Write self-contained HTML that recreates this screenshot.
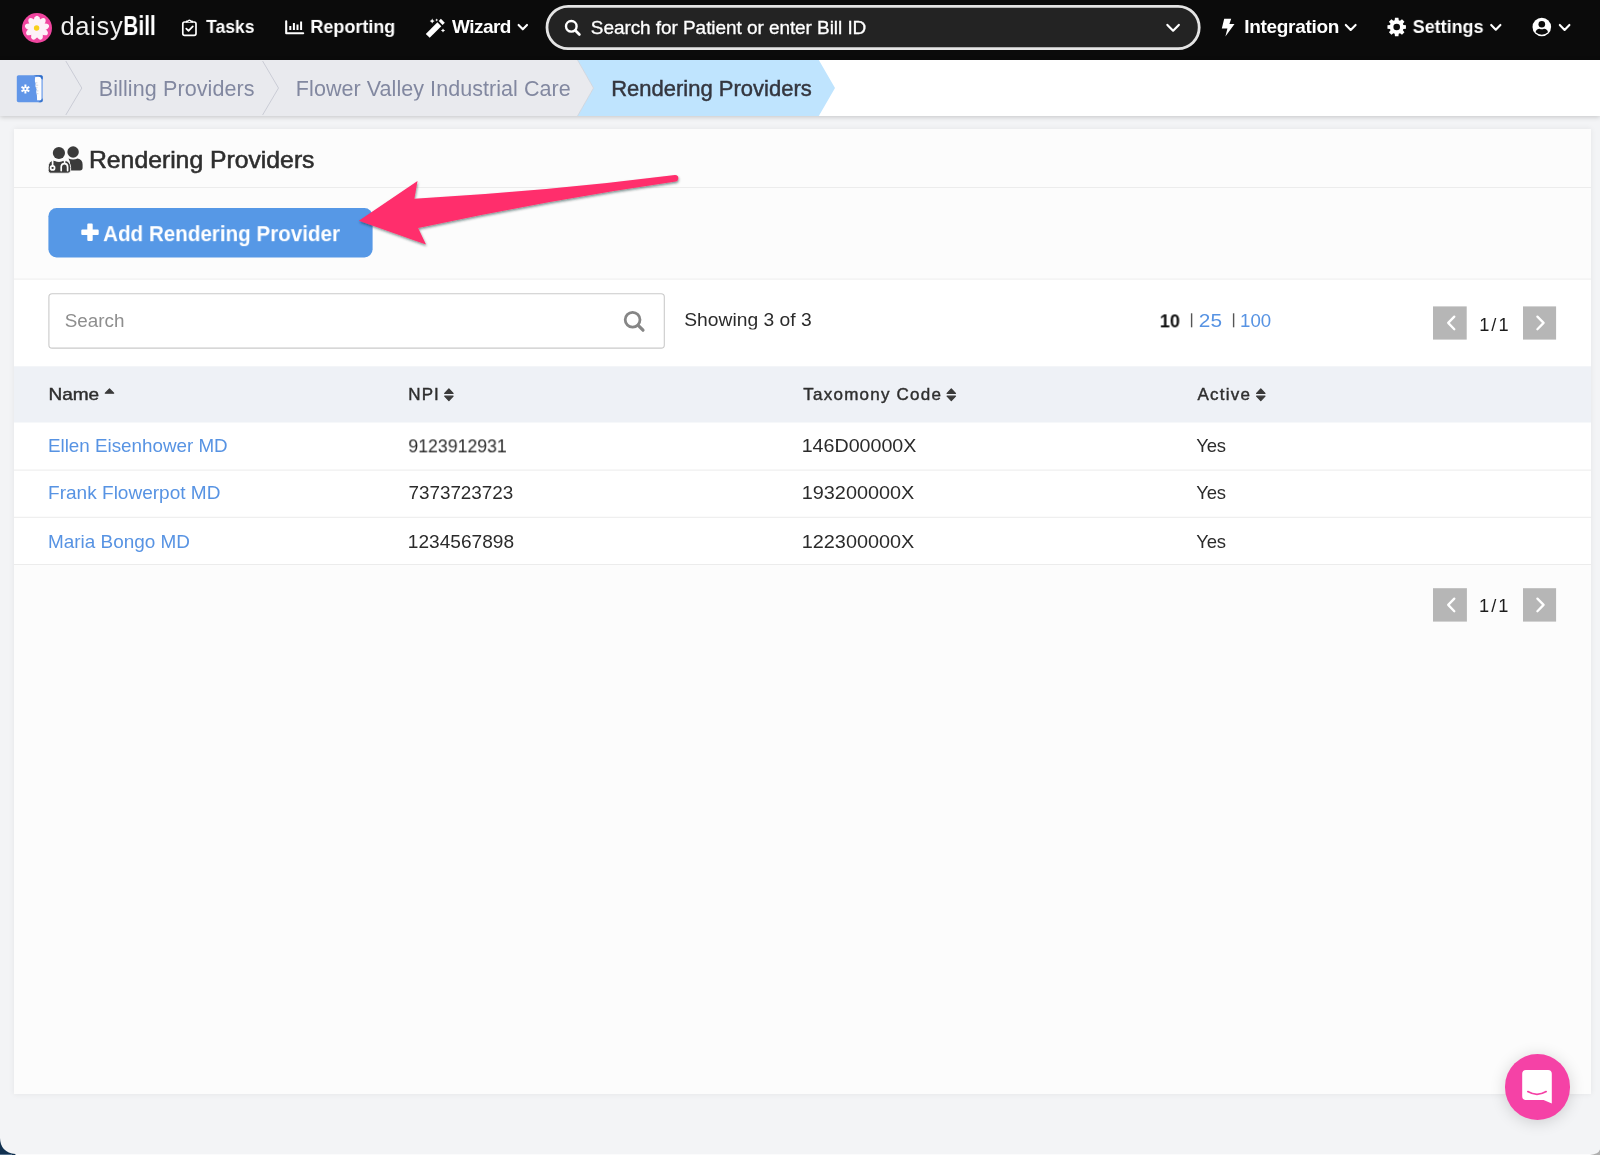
<!DOCTYPE html>
<html lang="en">
<head>
<meta charset="utf-8">
<title>Rendering Providers - daisyBill</title>
<style>
*{box-sizing:border-box;margin:0;padding:0}
html,body{width:1600px;height:1155px;overflow:hidden}
body{position:relative;background:#f3f4f6;font-family:"Liberation Sans",sans-serif;color:#222}
.abs{position:absolute}
.t{position:absolute;white-space:nowrap;line-height:1;text-decoration:none;will-change:transform}
#nav{left:0;top:0;width:1600px;height:60px;background:#0b0b0b}
#crumbs{left:0;top:60px;width:1600px;height:56px;background:#fff;box-shadow:0 1px 5px rgba(0,0,0,.2)}
#card{left:14px;top:129px;width:1577px;height:965px;background:#fcfcfc;box-shadow:0 0 6px rgba(0,0,0,.07)}
svg{position:absolute;overflow:visible}
</style>
</head>
<body>

<!-- NAVBAR -->
<div id="nav" class="abs">
  <svg id="daisy" style="left:22px;top:12.6px" width="30" height="30" viewBox="0 0 30 30">
    <circle cx="15" cy="15" r="15" fill="#f0459f"/>
    <g fill="#fff" opacity=".93">
      <ellipse cx="15" cy="8.3" rx="3.3" ry="5.6"/>
      <ellipse cx="15" cy="8.3" rx="3.3" ry="5.6" transform="rotate(40 15 15)"/>
      <ellipse cx="15" cy="8.3" rx="3.3" ry="5.6" transform="rotate(80 15 15)"/>
      <ellipse cx="15" cy="8.3" rx="3.3" ry="5.6" transform="rotate(120 15 15)"/>
      <ellipse cx="15" cy="8.3" rx="3.3" ry="5.6" transform="rotate(160 15 15)"/>
      <ellipse cx="15" cy="8.3" rx="3.3" ry="5.6" transform="rotate(200 15 15)"/>
      <ellipse cx="15" cy="8.3" rx="3.3" ry="5.6" transform="rotate(240 15 15)"/>
      <ellipse cx="15" cy="8.3" rx="3.3" ry="5.6" transform="rotate(280 15 15)"/>
      <ellipse cx="15" cy="8.3" rx="3.3" ry="5.6" transform="rotate(320 15 15)"/>
    </g>
    <circle cx="14.6" cy="15" r="2.7" fill="#f8cf1c"/>
  </svg>
  <span class="t" id="logo1" style="left:60px;top:14px;font-size:25.5px;letter-spacing:0.675px;color:#f0f0f0;transform-origin:0 0;transform:translate(0.40px,0.31px);">daisy</span><span class="t" id="logo2" style="left:123px;top:13px;font-size:27px;letter-spacing:0.000px;color:#fff;font-weight:bold;transform-origin:0 0;transform:translate(0.20px,0.04px) scaleX(0.7766);">Bill</span>

  <!-- clipboard-check -->
  <svg style="left:0;top:0" width="1600" height="60" viewBox="0 0 1600 60" fill="none" stroke="#fff" stroke-linecap="round" stroke-linejoin="round">
    <rect x="182.8" y="22" width="13.2" height="13.4" rx="1.8" stroke-width="1.7"/>
    <path d="M186.6,22 V21.2 H187.9 A1.6,1.6 0 0 1 190.9,21.2 H192.2 V22" stroke-width="1.5" fill="#0b0b0b"/>
    <path d="M186.3,28.7 L188.5,30.9 L192.8,26.4" stroke-width="1.8"/>
    <!-- bar chart -->
    <path d="M286.2,21.2 V33.3 H303.2" stroke-width="2.1"/>
    <path d="M290.3,26 V30 M293.9,23 V30 M297.5,24.6 V30 M301.1,21.6 V30" stroke-width="2" stroke-linecap="butt"/>
    <!-- wand -->
    <g stroke="none" fill="#fff">
      <path d="M425.8,33.9 L437.4,22.3 L441.3,26.2 L429.7,37.8 Z"/>
      <path d="M438.7,21 L440.9,18.8 L444.8,22.7 L442.6,24.9 Z"/>
      <path d="M432.2,18.6 l.8,1.7 l1.7,.8 l-1.7,.8 l-.8,1.7 l-.8,-1.7 l-1.7,-.8 l1.7,-.8 Z"/>
      <path d="M436.7,18.4 l.5,1 l1,.5 l-1,.5 l-.5,1 l-.5,-1 l-1,-.5 l1,-.5 Z"/>
      <path d="M443,28.4 l.7,1.4 l1.4,.7 l-1.4,.7 l-.7,1.4 l-.7,-1.4 l-1.4,-.7 l1.4,-.7 Z"/>
    </g>
    <!-- chevrons -->
    <path d="M518.6,24.9 L522.8,29.3 L527,24.9" stroke-width="2.1"/>
    <path d="M1345.8,24.9 L1350.7,29.9 L1355.6,24.9" stroke-width="2.1"/>
    <path d="M1491.2,24.9 L1495.8,29.7 L1500.4,24.9" stroke-width="2.1"/>
    <path d="M1559.8,24.9 L1564.6,29.9 L1569.4,24.9" stroke-width="2.1"/>
    <!-- bolt -->
    <path stroke="none" fill="#fff" d="M1224.2,18.7 H1231.2 L1229.4,24 H1234.5 L1225.4,36.4 L1227.4,28.6 H1221.8 Z"/>
    <!-- gear -->
    <path stroke="none" fill="#fff" fill-rule="evenodd" d="M1394.67,20.30 L1394.96,17.76 L1398.44,17.76 L1398.73,20.30 L1400.00,20.83 L1402.00,19.24 L1404.46,21.70 L1402.87,23.70 L1403.40,24.97 L1405.94,25.26 L1405.94,28.74 L1403.40,29.03 L1402.87,30.30 L1404.46,32.30 L1402.00,34.76 L1400.00,33.17 L1398.73,33.70 L1398.44,36.24 L1394.96,36.24 L1394.67,33.70 L1393.40,33.17 L1391.40,34.76 L1388.94,32.30 L1390.53,30.30 L1390.00,29.03 L1387.46,28.74 L1387.46,25.26 L1390.00,24.97 L1390.53,23.70 L1388.94,21.70 L1391.40,19.24 L1393.40,20.83 Z M1393.40,27.00 A3.3,3.3 0 1 0 1400.00,27.00 A3.3,3.3 0 1 0 1393.40,27.00 Z"/>
    <!-- user circle -->
    <circle cx="1541.8" cy="27" r="9.3" fill="#fff" stroke="none"/>
    <circle cx="1541.8" cy="24.3" r="3.3" fill="#0b0b0b" stroke="none"/>
    <path stroke="none" fill="#0b0b0b" d="M1535.6,32.3 Q1536.2,29 1539.6,28.8 Q1541.8,29.8 1544,28.8 Q1547.4,29 1548,32.3 Q1545.4,34.7 1541.8,34.7 Q1538.2,34.7 1535.6,32.3 Z"/>
  </svg>
  <span class="t" id="n1" style="left:206px;top:16px;font-size:19px;letter-spacing:0.000px;color:#fff;font-weight:bold;transform-origin:0 0;transform:translate(0.14px,0.92px) scaleX(0.9203);">Tasks</span><span class="t" id="n2" style="left:310px;top:16px;font-size:19px;letter-spacing:0.000px;color:#fff;font-weight:bold;transform-origin:0 0;transform:translate(0.36px,0.92px) scaleX(0.9464);">Reporting</span><span class="t" id="n3" style="left:451px;top:16px;font-size:19px;letter-spacing:-0.518px;color:#fff;font-weight:bold;transform-origin:0 0;transform:translate(0.90px,0.92px);">Wizard</span>
  <svg style="left:0;top:0" width="1600" height="60" viewBox="0 0 1600 60"><rect x="547" y="6.4" width="652.2" height="42.2" rx="21.1" fill="#232323" stroke="#e4e4e4" stroke-width="2.8"/></svg>
  <svg style="left:0;top:0" width="1600" height="60" viewBox="0 0 1600 60" fill="none" stroke="#fff" stroke-linecap="round" stroke-linejoin="round">
    <circle cx="571.3" cy="26.3" r="5.3" stroke-width="2.4"/>
    <path d="M575.4,30.5 L579.4,34.5" stroke-width="2.7"/>
    <path d="M1167.4,24.9 L1173.1,30.7 L1178.8,24.9" stroke-width="2.2"/>
  </svg>
  <span class="t" id="n4" style="left:590px;top:17px;font-size:19px;letter-spacing:-0.065px;color:#fff;-webkit-text-stroke:.3px #fff;transform-origin:0 0;transform:translate(0.80px,0.72px);">Search for Patient or enter Bill ID</span><span class="t" id="n5" style="left:1244px;top:16px;font-size:19px;letter-spacing:-0.291px;color:#fff;font-weight:bold;transform-origin:0 0;transform:translate(0.19px,0.92px);">Integration</span><span class="t" id="n6" style="left:1412px;top:16px;font-size:19px;letter-spacing:0.000px;color:#fff;font-weight:bold;transform-origin:0 0;transform:translate(0.71px,0.92px) scaleX(0.9438);">Settings</span>
</div>

<!-- BREADCRUMBS -->
<div id="crumbs" class="abs">
  <svg style="left:0;top:0" width="900" height="56" viewBox="0 0 900 55.5" preserveAspectRatio="none">
    <polygon points="0,0 577.5,0 593.5,27.8 577.5,55.5 0,55.5" fill="#e9eaee"/>
    <polygon points="577.5,0 818.8,0 835,27.8 818.8,55.5 577.5,55.5 593.5,27.8" fill="#bfe4fe"/>
    <polyline points="577.5,0 593.5,27.8 577.5,55.5" fill="none" stroke="#cfd2da" stroke-width=".8"/>
    <polyline points="65.8,1 81.8,27.8 65.8,54.5" fill="none" stroke="#c6c9d3" stroke-width=".9"/>
    <polyline points="262.6,1 278.5,27.8 262.6,54.5" fill="none" stroke="#c6c9d3" stroke-width=".9"/>
    <!-- home icon -->
    <rect x="16.8" y="15" width="25.9" height="26.8" rx="1.7" fill="#6196e8"/>
    <path d="M33.5,15 H41 Q42.7,15 42.7,16.7 V20 L40.4,17.2 Z" fill="#2f6dc8"/>
    <path d="M38.5,41.8 H41 Q42.7,41.8 42.7,40.1 V37.5 L40.6,40 Z" fill="#3a75cc"/>
    <rect x="41" y="19" width="1.5" height="19.5" fill="#9cbcef"/>
    <path d="M35,17.2 Q37.6,16.2 40.2,16.9 L41.2,18.6 V39.6 Q39.2,40.2 37.1,39.9 L36.9,35 L36.2,31.6 L36.6,29 L35.4,26 L35.6,23.4 L34.9,21 Z" fill="#fdfdfe"/>
    <path d="M35.6,22.6 h1.8 M36,25 h2.2 M35.9,27.4 h1.6 M36.8,30.6 h1.6 M37,33.4 h1.4" stroke="#c8c8cc" stroke-width=".7" fill="none"/>
    <g stroke="#fff" stroke-width="2" stroke-linecap="butt">
      <path d="M25.4,24.3 V33.3 M21.5,26.55 L29.3,31.05 M29.3,26.55 L21.5,31.05"/>
    </g>
    <circle cx="25.4" cy="28.8" r="1" fill="#6196e8"/>
  </svg>
  <span class="t" id="c1" style="left:98px;top:18px;font-size:21.5px;letter-spacing:0.105px;color:#8288a0;transform-origin:0 0;transform:translate(0.77px,0.55px);">Billing Providers</span><span class="t" id="c2" style="left:295px;top:18px;font-size:21.5px;letter-spacing:0.059px;color:#8288a0;transform-origin:0 0;transform:translate(0.86px,0.55px);">Flower Valley Industrial Care</span><span class="t" id="c3" style="left:611px;top:18px;font-size:21.5px;letter-spacing:0.000px;color:#34363f;-webkit-text-stroke:.45px #34363f;transform-origin:0 0;transform:translate(0.13px,0.55px) scaleX(1.0236);">Rendering Providers</span>
</div>

<!-- CARD -->
<div id="card" class="abs">
  <svg id="cardshapes" style="left:-14px;top:-129px" width="1600" height="1155" viewBox="0 0 1600 1155">
    <!-- section backgrounds and rules -->
    <rect x="14" y="187" width="1577" height="1" fill="#ececec"/>
    <rect x="14" y="279" width="1577" height="87.4" fill="#fff"/>
    <rect x="14" y="278.6" width="1577" height="1" fill="#ededed"/>
    <rect x="14" y="366.3" width="1577" height="56.4" fill="#eef1f6"/>
    <rect x="14" y="422.7" width="1577" height="141.6" fill="#fff"/>
    <rect x="14" y="469.6" width="1577" height="1" fill="#ececec"/>
    <rect x="14" y="516.8" width="1577" height="1" fill="#ececec"/>
    <rect x="14" y="564" width="1577" height="1" fill="#ececec"/>
    <!-- people icon -->
    <g fill="#3b3b3b">
      <circle cx="73.1" cy="152" r="5.7"/>
      <path d="M68.5,158.6 Q73,160.6 77.6,158.6 Q82.6,159.4 82.6,164.6 V167.8 Q82.6,170.4 80,170.4 H70 V162 Z"/>
      <circle cx="58.9" cy="153" r="6.1"/>
      <path stroke="#fcfcfc" stroke-width=".9" d="M53.4,160.2 Q58.9,163 64.4,160.2 Q70.6,161.2 70.6,167.4 V170.6 Q70.6,173.2 68,173.2 H50.6 Q48.2,173.2 48.2,170.6 V167.4 Q48.2,161.2 53.4,160.2 Z"/>
    </g>
    <g fill="none" stroke="#fcfcfc" stroke-width="1.7" stroke-linecap="round">
      <path d="M52.6,160.6 V166"/>
      <circle cx="52.6" cy="167.9" r="2"/>
      <path d="M64.6,160.8 V163.4 M61.2,170.6 V167 Q61.2,163.6 64.6,163.6 Q67.6,163.6 67.6,167 V170.6"/>
    </g>
    <!-- add button -->
    <rect id="addbtn" x="48.4" y="208.1" width="324.2" height="49.4" rx="8.2" fill="#5698e6"/>
    <path transform="translate(81.1,223.3)" d="M6.2,1.2 Q6.2,.2 7.2,.2 H10.6 Q11.6,.2 11.6,1.2 V6.2 H16.6 Q17.6,6.2 17.6,7.2 V10.6 Q17.6,11.6 16.6,11.6 H11.6 V16.6 Q11.6,17.6 10.6,17.6 H7.2 Q6.2,17.6 6.2,16.6 V11.6 H1.2 Q.2,11.6 .2,10.6 V7.2 Q.2,6.2 1.2,6.2 H6.2 Z" fill="#fff"/>
    <!-- search input -->
    <rect x="48.9" y="293.7" width="615.4" height="54.4" rx="3.2" fill="#fff" stroke="#cacaca" stroke-width="1.1"/>
    <g fill="none" stroke="#868686" stroke-linecap="round">
      <circle cx="632.6" cy="319.7" r="7.4" stroke-width="2.8"/>
      <path d="M638.2,325.4 L643,330.2" stroke-width="3.2"/>
    </g>
    <!-- per-page bars -->
    <rect x="1190.9" y="313.3" width="1.4" height="14" fill="#555"/>
    <rect x="1232.9" y="313.3" width="1.4" height="14" fill="#555"/>
    <!-- pagination buttons -->
    <g fill="#b6b6b6">
      <rect x="1433" y="306.4" width="33.7" height="33.2"/>
      <rect x="1523" y="306.4" width="33.1" height="33.2"/>
      <rect x="1433" y="588.2" width="33.9" height="33.4"/>
      <rect x="1523" y="588.2" width="33.1" height="33.4"/>
    </g>
    <g fill="none" stroke="#fff" stroke-width="2.3" stroke-linecap="round" stroke-linejoin="round">
      <path d="M1454.3,316.6 L1448.2,322.9 L1454.3,329.2"/>
      <path d="M1537.4,316.6 L1543.6,322.9 L1537.4,329.2"/>
      <path d="M1454.3,598.6 L1448.2,604.9 L1454.3,611.2"/>
      <path d="M1537.4,598.6 L1543.6,604.9 L1537.4,611.2"/>
    </g>
    <!-- sort carets -->
    <g fill="#3a3a3a" stroke="#3a3a3a" stroke-width="1.2" stroke-linejoin="round">
      <path d="M109.5,389 L113.7,393.2 H105.3 Z"/>
      <path d="M448.9,389 L453.1,393.4 H444.7 Z M448.9,400.6 L453.1,396.2 H444.7 Z"/>
      <path d="M951.3,389 L955.5,393.4 H947.1 Z M951.3,400.6 L955.5,396.2 H947.1 Z"/>
      <path d="M1260.8,389 L1265,393.4 H1256.6 Z M1260.8,400.6 L1265,396.2 H1256.6 Z"/>
    </g>
  </svg>
  <span class="t" id="title" style="left:75px;top:19px;font-size:23.4px;letter-spacing:0.000px;color:#2e2e2e;-webkit-text-stroke:.55px #2e2e2e;transform-origin:0 0;transform:translate(0.00px,0.94px) scaleX(1.0575);">Rendering Providers</span>
  <span class="t" id="addtxt" style="left:89px;top:94px;font-size:22px;letter-spacing:0.000px;color:#fff;font-weight:bold;transform-origin:0 0;transform:translate(0.10px,0.13px) scaleX(0.9362);">Add Rendering Provider</span>
  <span class="t" id="sph" style="left:50px;top:183px;font-size:18.3px;letter-spacing:0.000px;color:#8e8e8e;transform-origin:0 0;transform:translate(0.69px,0.31px) scaleX(1.0310);">Search</span>
  <span class="t" id="showing" style="left:670px;top:181px;font-size:18.4px;letter-spacing:0.000px;color:#2b2b2b;transform-origin:0 0;transform:translate(0.25px,0.52px) scaleX(1.0473);">Showing 3 of 3</span>
  <span class="t" id="p10" style="left:1145px;top:183px;font-size:18.4px;letter-spacing:0.000px;color:#111;font-weight:bold;transform-origin:0 0;transform:translate(0.71px,0.32px) scaleX(0.9875);">10</span><a class="t" id="p25" style="left:1184px;top:183px;font-size:18.4px;letter-spacing:0.000px;color:#5793e3;transform-origin:0 0;transform:translate(0.87px,0.32px) scaleX(1.1320);">25</a><a class="t" id="p100" style="left:1226px;top:183px;font-size:18.4px;letter-spacing:0.000px;color:#5793e3;transform-origin:0 0;transform:translate(0.09px,0.32px) scaleX(1.0133);">100</a>
  <span class="t" id="pg1" style="left:1465px;top:187px;font-size:18.2px;letter-spacing:-1.494px;color:#1c1c1c;transform-origin:0 0;transform:translate(0.14px,0.34px);">1 / 1</span>
  <span class="t" id="h1" style="left:34px;top:256px;font-size:17px;letter-spacing:0.000px;color:#2e2e2e;-webkit-text-stroke:.42px #2e2e2e;transform-origin:0 0;transform:translate(0.46px,0.86px) scaleX(1.1185);">Name</span><span class="t" id="h2" style="left:394px;top:256px;font-size:17px;letter-spacing:1.046px;color:#2e2e2e;-webkit-text-stroke:.42px #2e2e2e;transform-origin:0 0;transform:translate(0.32px,0.86px);">NPI</span><span class="t" id="h3" style="left:789px;top:256px;font-size:17px;letter-spacing:1.230px;color:#2e2e2e;-webkit-text-stroke:.42px #2e2e2e;transform-origin:0 0;transform:translate(0.31px,0.86px);">Taxomony Code</span><span class="t" id="h4" style="left:1183px;top:256px;font-size:17px;letter-spacing:1.199px;color:#2e2e2e;-webkit-text-stroke:.42px #2e2e2e;transform-origin:0 0;transform:translate(0.57px,0.86px);">Active</span>
  <a class="t" id="r1a" style="left:33px;top:308px;font-size:18.5px;letter-spacing:0.000px;color:#5793e3;transform-origin:0 0;transform:translate(0.96px,0.34px) scaleX(1.0162);">Ellen Eisenhower MD</a><span class="t" id="r1b" style="left:394px;top:308px;font-size:18.5px;letter-spacing:0.000px;color:#2b2b2b;transform-origin:0 0;transform:translate(0.36px,0.34px) scaleX(0.9565);">9123912931</span><span class="t" id="r1c" style="left:787px;top:308px;font-size:18.5px;letter-spacing:0.000px;color:#2b2b2b;transform-origin:0 0;transform:translate(0.64px,0.34px) scaleX(1.0624);">146D00000X</span><span class="t" id="r1d" style="left:1182px;top:308px;font-size:18.5px;letter-spacing:-0.211px;color:#2b2b2b;transform-origin:0 0;transform:translate(0.32px,0.34px);">Yes</span>
  <a class="t" id="r2a" style="left:34px;top:355px;font-size:18.5px;letter-spacing:0.000px;color:#5793e3;transform-origin:0 0;transform:translate(0.07px,0.34px) scaleX(1.0287);">Frank Flowerpot MD</a><span class="t" id="r2b" style="left:394px;top:355px;font-size:18.5px;letter-spacing:0.000px;color:#2b2b2b;transform-origin:0 0;transform:translate(0.39px,0.34px) scaleX(1.0202);">7373723723</span><span class="t" id="r2c" style="left:787px;top:355px;font-size:18.5px;letter-spacing:0.000px;color:#2b2b2b;transform-origin:0 0;transform:translate(0.72px,0.34px) scaleX(1.0731);">193200000X</span><span class="t" id="r2d" style="left:1182px;top:355px;font-size:18.5px;letter-spacing:-0.211px;color:#2b2b2b;transform-origin:0 0;transform:translate(0.32px,0.34px);">Yes</span>
  <a class="t" id="r3a" style="left:33px;top:403px;font-size:18.5px;letter-spacing:0.000px;color:#5793e3;transform-origin:0 0;transform:translate(0.97px,0.94px) scaleX(1.0234);">Maria Bongo MD</a><span class="t" id="r3b" style="left:393px;top:403px;font-size:18.5px;letter-spacing:0.000px;color:#2b2b2b;transform-origin:0 0;transform:translate(0.84px,0.94px) scaleX(1.0319);">1234567898</span><span class="t" id="r3c" style="left:787px;top:403px;font-size:18.5px;letter-spacing:0.000px;color:#2b2b2b;transform-origin:0 0;transform:translate(0.72px,0.94px) scaleX(1.0731);">122300000X</span><span class="t" id="r3d" style="left:1182px;top:403px;font-size:18.5px;letter-spacing:-0.211px;color:#2b2b2b;transform-origin:0 0;transform:translate(0.32px,0.94px);">Yes</span>
  <span class="t" id="pg2" style="left:1465px;top:468px;font-size:18.2px;letter-spacing:-1.503px;color:#1c1c1c;transform-origin:0 0;transform:translate(0.10px,0.09px);">1 / 1</span>
</div>

<!-- ARROW -->
<svg style="left:340px;top:160px" width="360" height="100" viewBox="340 160 360 100">
  <defs><filter id="sh" x="-10%" y="-30%" width="120%" height="170%"><feDropShadow dx=".6" dy="1.6" stdDeviation="1.1" flood-color="#002a2a" flood-opacity=".5"/></filter></defs>
  <path filter="url(#sh)" d="M358.8,220.8 L417.5,181 L414.4,198.7 Q544.7,191.6 675,175.1 Q678.6,175.2 678.3,178.4 Q678,181 675.6,181.4 Q547,200 418.1,228.1 L426,244.4 Z" fill="#ff2d6c"/>
</svg>

<!-- CHAT -->
<div class="abs" style="left:1504.5px;top:1054.3px;width:65.5px;height:65.5px;border-radius:50%;background:#f542a6;box-shadow:0 2px 16px rgba(0,0,0,.16)"></div>
<svg style="left:1520px;top:1068px" width="34" height="38" viewBox="1520 1068 34 38">
  <path d="M1526,1070 H1548 Q1551.8,1070 1551.8,1073.8 V1103.6 L1543.6,1100 H1526 Q1522.2,1100 1522.2,1096.2 V1073.8 Q1522.2,1070 1526,1070 Z" fill="#fff"/>
  <path d="M1527.8,1091.6 Q1537,1097 1546.2,1091.6" fill="none" stroke="#f542a6" stroke-width="1.7" stroke-linecap="round"/>
</svg>

<!-- window corners -->
<div class="abs" style="left:0;top:1154px;width:1600px;height:1px;background:#fbfbfc"></div>
<svg style="left:0;top:1138px" width="16" height="17" viewBox="0 0 16 17"><path d="M0,0 Q0.4,14.6 15.4,16 L15.4,17 H0 Z" fill="#10304f"/><rect x="0" y="16" width="12" height="1" fill="#54708c"/></svg>
<svg style="left:1589px;top:1149px" width="11" height="6" viewBox="0 0 11 6"><path d="M11,.5 Q9.5,5 1,6 H11 Z" fill="#a6a6a6" opacity=".9"/></svg>

</body>
</html>
